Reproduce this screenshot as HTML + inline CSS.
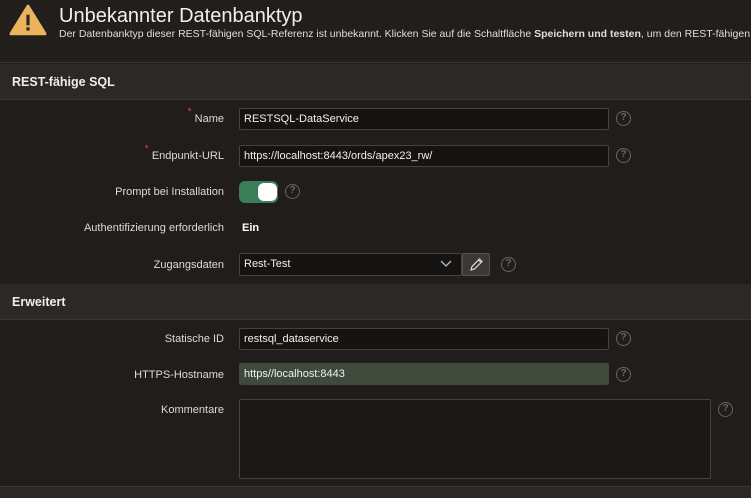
<!DOCTYPE html>
<html><head><meta charset="utf-8"><style>
*{box-sizing:border-box;margin:0;padding:0}
body{width:751px;height:498px;overflow:hidden;background:#211d1b;font-family:"Liberation Sans",sans-serif;color:#e8e6e3;position:relative;font-size:11px}
.a{position:absolute}
.hdr{left:0;top:0;width:751px;height:63px;background:#221e1c;border-bottom:1px solid #3a3634}
.title{left:59px;top:5px;font-size:20px;color:#f2f0ee;white-space:nowrap}
.sub{left:59px;top:28px;width:692px;overflow:hidden;font-size:10.5px;white-space:nowrap;color:#e0ddd9}
.sec{left:0;width:751px;height:36px;background:#2c2826;border-bottom:1px solid #3a3634;font-weight:bold;font-size:12.5px;padding:11px 0 0 12px;color:#f0eeec}
.lbl{right:527px;font-size:11px;color:#dedbd7;text-align:right;white-space:nowrap}
.inp{left:239px;width:370px;height:22px;background:#161413;border:1px solid #45413e;border-radius:2px;padding:4px 0 0 4px;font-size:11px;color:#f2f0ee;white-space:nowrap}
.help{width:15px;height:15px;border:1.5px solid #6a6562;border-radius:50%;color:#6a6562;font-size:10px;text-align:center;line-height:12px;font-weight:bold}
.star{color:#d0402b;font-size:11px}
</style></head><body>
<div class="a hdr"></div>
<svg class="a" style="left:9px;top:4px" width="38" height="32" viewBox="0 0 36 30"><path d="M18 2 L34 28 L2 28 Z" fill="#e9b45d" stroke="#e9b45d" stroke-width="3" stroke-linejoin="round"/><rect x="16.5" y="10" width="3" height="10" fill="#2a2520"/><rect x="16.5" y="22" width="3" height="3" fill="#2a2520"/></svg>
<div class="a title">Unbekannter Datenbanktyp</div>
<div class="a sub">Der Datenbanktyp dieser REST-fähigen SQL-Referenz ist unbekannt. Klicken Sie auf die Schaltfläche <b>Speichern und testen</b>, um den REST-fähigen SQL-Typ zu ermitteln.</div>

<div class="a sec" style="top:64px">REST-fähige SQL</div>

<div class="a lbl" style="top:113px"><span class="star" style="position:relative;top:-7px">*</span> Name</div>
<div class="a inp" style="top:108px">RESTSQL-DataService</div>
<div class="a help" style="left:616px;top:111px">?</div>

<div class="a lbl" style="top:150px"><span class="star" style="position:relative;top:-7px">*</span> Endpunkt-URL</div>
<div class="a inp" style="top:145px">https://localhost:8443/ords/apex23_rw/</div>
<div class="a help" style="left:616px;top:148px">?</div>

<div class="a lbl" style="top:186px">Prompt bei Installation</div>
<div class="a" style="left:239px;top:181px;width:39px;height:22px;background:#3a7d57;border-radius:6px"></div>
<div class="a" style="left:258px;top:183px;width:19px;height:18px;background:#fff;border-radius:6px"></div>
<div class="a help" style="left:285px;top:184px">?</div>

<div class="a lbl" style="top:222px">Authentifizierung erforderlich</div>
<div class="a" style="left:242px;top:222px;font-weight:bold;color:#fff">Ein</div>

<div class="a lbl" style="top:259px">Zugangsdaten</div>
<div class="a inp" style="top:253px;width:223px;height:23px">Rest-Test</div>
<svg class="a" style="left:440px;top:260px" width="12" height="8"><path d="M1 1 L6 6 L11 1" stroke="#bbb" fill="none" stroke-width="1.3"/></svg>
<div class="a" style="left:462px;top:253px;width:28px;height:23px;background:#3c3836;border:1px solid #55514e;border-radius:2px"></div>
<svg class="a" style="left:468px;top:257px" width="16" height="16" viewBox="0 0 16 16"><path d="M3 13 L4 9.5 L11.5 2 L14 4.5 L6.5 12 Z M10.5 3 L13 5.5" stroke="#ddd" fill="none" stroke-width="1.2"/></svg>
<div class="a help" style="left:501px;top:257px">?</div>

<div class="a sec" style="top:284px">Erweitert</div>

<div class="a lbl" style="top:333px">Statische ID</div>
<div class="a inp" style="top:328px">restsql_dataservice</div>
<div class="a help" style="left:616px;top:331px">?</div>

<div class="a lbl" style="top:369px">HTTPS-Hostname</div>
<div class="a inp" style="top:363px;background:#3f4a3d;border-color:#3f4a3d">https//localhost:8443</div>
<div class="a help" style="left:616px;top:367px">?</div>

<div class="a lbl" style="top:404px">Kommentare</div>
<div class="a inp" style="top:399px;width:472px;height:80px;background:#1a1816"></div>
<div class="a help" style="left:718px;top:402px">?</div>

<div class="a" style="left:0;top:486px;width:751px;height:12px;background:#2c2826;border-top:1px solid #3a3634"></div>
</body></html>
